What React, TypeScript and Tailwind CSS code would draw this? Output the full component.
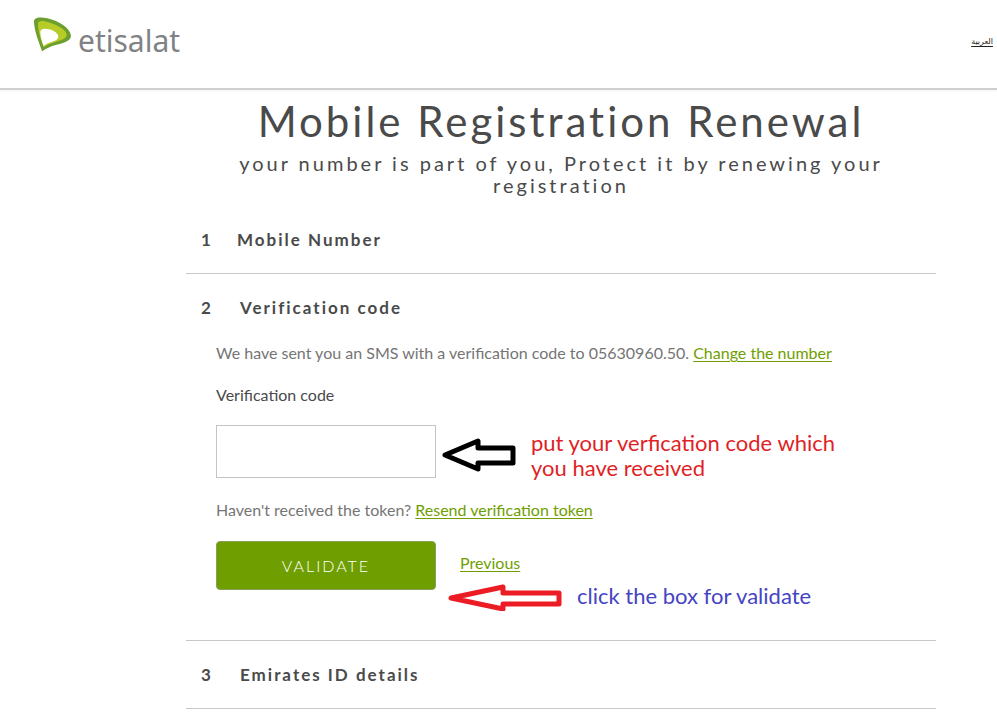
import React from 'react';
import { clsx } from 'clsx';

interface StepProps {
  number: number;
  title: string;
  children?: React.ReactNode;
}

const Logo: React.FC = () => (
  <div className="flex items-start">
    <svg className="h-10 w-11" viewBox="30 19 132 120" role="img" aria-label="logo">
      <path d="M42 50C40 36 56 32 82 38C118 46 151 68 153 90C153 106 130 112 104 119C88 124 78 129 66 137C58 112 43 78 42 50Z" fill="#6d9f2e" />
      <path d="M54 54C54 44 68 44 90 51C120 60 141 76 140 89C138 101 118 106 100 111C86 115 78 119 71 125C64 104 54 78 54 54Z" fill="#b7cc26" />
      <path d="M61 82C60 70 72 67 87 71C104 75 116 85 115 94C113 104 99 108 89 111C81 113 76 117 71 121C66 110 62 96 61 82Z" fill="#fff" />
    </svg>
    <span className="mt-[9px] ml-1 font-['Noto_Sans',sans-serif] text-[30px] leading-10 text-[#808285]">etisalat</span>
  </div>
);

const Step: React.FC<StepProps> = ({ number, title, children }) => (
  <section className="border-b border-[#c8c8c8]">
    <h3 className="flex py-5 pl-[15px] text-[17px] leading-[27px] font-bold tracking-[2px]">
      <span className={clsx(number === 1 ? 'w-9' : 'w-[39px]')}>{number}</span>
      {title}
    </h3>
    {children}
  </section>
);

const linkClass = 'text-[#6f9e00] underline underline-offset-2';

export default function App() {
  return (
    <div className="min-h-screen bg-white font-['Lato',sans-serif] text-[#4a4a4a]">
      <header className="flex h-[90px] items-start justify-between border-b-2 border-[#cfcfcf] pt-3 pr-1 pl-[30px] shadow-xs">
        <Logo />
        <a href="#ar" lang="ar" dir="rtl" className="mt-5 font-['DejaVu_Sans',sans-serif] text-[8px] leading-5 text-[#222] underline underline-offset-2">
          العربية
        </a>
      </header>

      <main className="mr-[61px] ml-[186px] max-w-[750px]">
        <div className="pt-[6px] pb-[10px] text-center">
          <h1 className="text-[42px] leading-[50px] tracking-[3px]">Mobile Registration Renewal</h1>
          <p className="mt-1.5 px-10 text-xl leading-[22px] tracking-[3px]">
            your number is part of you, Protect it by renewing your registration
          </p>
        </div>

        <Step number={1} title="Mobile Number" />

        <Step number={2} title="Verification code">
          <form className="pb-[50px] pl-[30px] text-base leading-6 text-[#757575]" onSubmit={(e) => e.preventDefault()}>
            <p>
              We have sent you an SMS with a verification code to 05630960.50.{' '}
              <a href="#change" className={linkClass}>Change the number</a>
            </p>
            <label htmlFor="code" className="mt-[18px] block text-[#4a4a4a]">Verification code</label>
            <div className="mt-[18px] flex h-[53px] items-start">
              <input id="code" type="text" className="h-[53px] w-[220px] border border-[#c4c4c4] px-3" />
              <svg className="mt-3 ml-1.5 h-9 w-[74px]" viewBox="0 0 74 36" fill="none" stroke="#000" strokeWidth="5" strokeLinejoin="round">
                <path d="M3 18L36 4V11H71V26H36V32Z" />
              </svg>
              <p className="mt-[5px] ml-[15px] w-[310px] text-[22px] leading-[25px] text-[#e01f26]">
                put your verfication code which you have received
              </p>
            </div>
            <p className="mt-5">
              Haven't received the token? <a href="#resend" className={linkClass}>Resend verification token</a>
            </p>
            <div className="relative mt-[19px] flex items-start">
              <button type="submit" className="h-[49px] w-[220px] rounded-sm border border-[#8a9e5c] bg-[#6f9e00] font-light tracking-[2px] text-white">
                VALIDATE
              </button>
              <a href="#previous" className={clsx(linkClass, 'mt-2.5 ml-6')}>Previous</a>
              <div className="absolute top-10 left-[231px] flex items-center">
                <svg className="h-[30px] w-[116px]" viewBox="0 0 116 30" fill="none" stroke="#ec1c24" strokeWidth="5" strokeLinejoin="round">
                  <path d="M4 17L56 6V12H112V23H56V28Z" />
                </svg>
                <p className="ml-3.5 text-[22px] leading-[30px] text-[#4444c4]">click the box for validate</p>
              </div>
            </div>
          </form>
        </Step>

        <Step number={3} title="Emirates ID details" />
      </main>
    </div>
  );
}
